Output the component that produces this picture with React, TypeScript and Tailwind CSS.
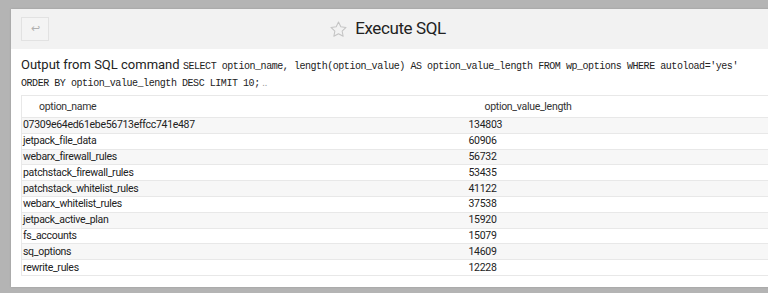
const rows: [string, string][] = [
  ["07309e64ed61ebe56713effcc741e487", "134803"],
  ["jetpack_file_data", "60906"],
  ["webarx_firewall_rules", "56732"],
  ["patchstack_firewall_rules", "53435"],
  ["patchstack_whitelist_rules", "41122"],
  ["webarx_whitelist_rules", "37538"],
  ["jetpack_active_plan", "15920"],
  ["fs_accounts", "15079"],
  ["sq_options", "14609"],
  ["rewrite_rules", "12228"],
];

function Star() {
  return (
    <svg width="19" height="19" viewBox="0 0 24 24" fill="none" stroke="#c4c4c4" strokeWidth="1.3" strokeLinejoin="round">
      <path d="M12 2.5l2.9 6.1 6.6.8-4.9 4.6 1.3 6.6L12 17.3l-5.9 3.3 1.3-6.6-4.9-4.6 6.6-.8z" />
    </svg>
  );
}

export default function App() {
  return (
    <div className="h-[293px] w-[768px] overflow-hidden bg-[#b4b4b4] pl-[11px] pt-[9px] font-['Roboto',sans-serif]">
      <div className="w-[780px] bg-white shadow-[0_0_2px_rgba(0,0,0,0.15)]">
        <div className="flex h-[40px] items-center bg-[#f2f2f2] px-[10px]">
          <button className="flex h-[24px] w-[28px] items-center justify-center border border-[#e2e2e2] bg-[#f4f4f4] text-[11px] text-[#b0b0b0]">
            ↩
          </button>
          <div className="flex flex-1 items-center justify-center gap-[7px] pr-[55px]">
            <Star />
            <span className="text-[17px] tracking-[-0.4px] text-[#222]">Execute SQL</span>
          </div>
        </div>
        <div className="px-[10px] pb-[11px] pt-[7px]">
          <p className="text-[13px] leading-[17px] text-[#222]">
            Output from SQL command{" "}
            <span className="font-['Liberation_Mono',monospace] text-[10px] leading-[10px] tracking-[-0.45px]">
              SELECT option_name, length(option_value) AS option_value_length FROM wp_options WHERE autoload='yes'
              <br />
              ORDER BY option_value_length DESC LIMIT 10;
            </span>
            <span className="text-[10px] leading-[10px] text-[#999]"> ..</span>
          </p>
          <table className="mt-[5px] w-full border-collapse text-[10.5px] tracking-[-0.3px] text-[#222]">
            <thead>
              <tr className="h-[22px] border border-[#e8e8e8] bg-white">
                <th className="w-[447px] pl-[17px] text-left font-normal text-[#333]">option_name</th>
                <th className="pl-[16px] text-left font-normal text-[#333]">option_value_length</th>
              </tr>
            </thead>
            <tbody>
              {rows.map(([name, len], i) => (
                <tr
                  key={name}
                  className={`h-[15.8px] border border-[#e8e8e8] ${i % 2 === 0 ? "bg-[#f7f7f7]" : "bg-white"}`}
                >
                  <td className="pl-[1px] leading-[14px]">{name}</td>
                  <td className="leading-[14px]">{len}</td>
                </tr>
              ))}
            </tbody>
          </table>
        </div>
      </div>
    </div>
  );
}
